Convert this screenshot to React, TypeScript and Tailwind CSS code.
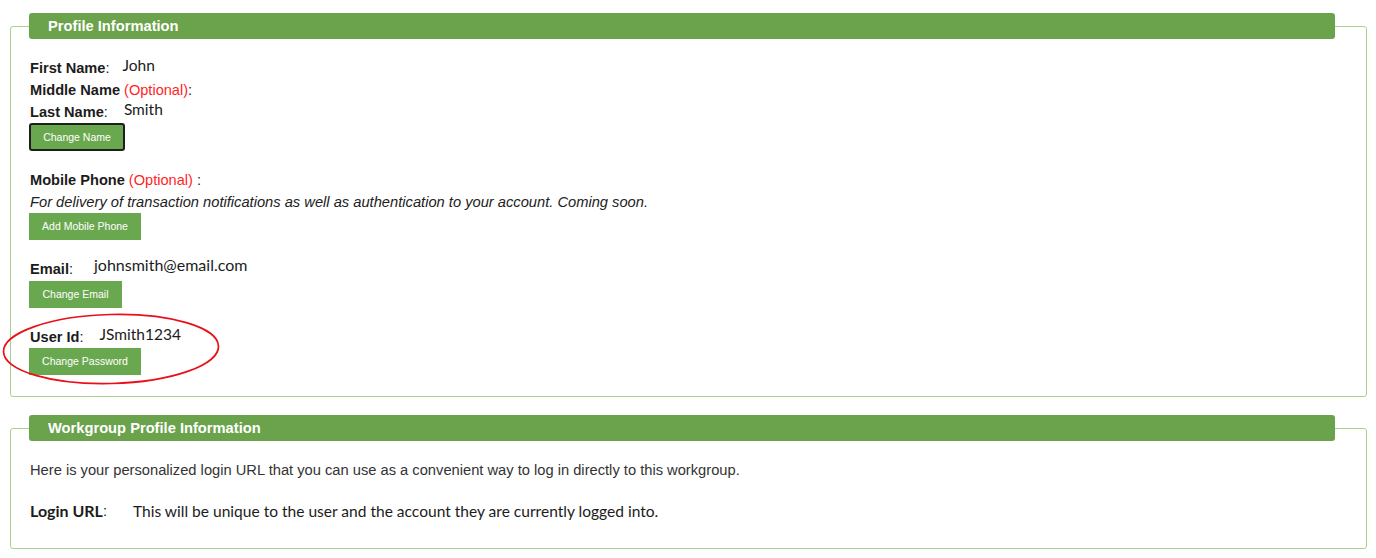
import React from "react";

const Btn = ({ label, w, bordered }: { label: string; w: string; bordered?: boolean }) => (
  <div
    className={
      "flex items-center justify-center bg-[#6aa84f] text-white text-[10.5px] leading-none " +
      w +
      (bordered ? " h-[28px] border-2 border-[#1f1f1f] rounded-[3px]" : " h-[27px]")
    }
  >
    {label}
  </div>
);

const Header = ({ title }: { title: string }) => (
  <div className="-mt-[14px] ml-[18px] mr-[31px] h-[26px] rounded-[3px] bg-[#6aa34b] pl-[19px] text-[14.7px] font-bold leading-[26px] text-white">
    {title}
  </div>
);

export default function App() {
  return (
    <div className="relative h-[558px] w-[1376px] overflow-hidden bg-white font-['Liberation_Sans',Arial,sans-serif] text-[#1c1c1c]">
      {/* Profile Information */}
      <section className="ml-[10px] mr-[9px] mt-[26px] rounded-[3px] border border-[#a9d18e] pb-[21px]">
        <Header title="Profile Information" />
        <div className="pl-[19px]">
          <div className="mt-[18px] flex h-[22px] items-start text-[14.6px] leading-[22px]">
            <span className="font-bold">First Name</span>
            <span>:</span>
            <span className="-mt-[3px] ml-[13px] font-['Lato',sans-serif] text-[15.5px] leading-[22px]">John</span>
          </div>
          <div className="flex h-[22px] items-start text-[14.6px] leading-[22px]">
            <span className="font-bold">Middle Name</span>
            <span className="ml-[4px] text-[#ff1f1f]">(Optional)</span>
            <span>:</span>
          </div>
          <div className="flex h-[22px] items-start text-[14.6px] leading-[22px]">
            <span className="font-bold">Last Name</span>
            <span>:</span>
            <span className="-mt-[3px] ml-[16px] font-['Lato',sans-serif] text-[15.5px] leading-[22px]">Smith</span>
          </div>
        </div>
        <div className="pl-[18px]">
          <Btn label="Change Name" w="w-[96px]" bordered />
        </div>

        <div className="pl-[19px]">
          <div className="mt-[18px] flex h-[22px] items-start text-[14.6px] leading-[22px]">
            <span className="font-bold">Mobile Phone</span>
            <span className="ml-[4px] text-[#ff1f1f]">(Optional)</span>
            <span className="ml-[4px]">:</span>
          </div>
          <div className="h-[22px] text-[14.7px] italic leading-[22px] text-[#222]">
            For delivery of transaction notifications as well as authentication to your account. Coming soon.
          </div>
        </div>
        <div className="pl-[18px]">
          <Btn label="Add Mobile Phone" w="w-[112px]" />
        </div>

        <div className="pl-[19px]">
          <div className="mt-[18px] flex h-[22px] items-start text-[14.6px] leading-[22px]">
            <span className="font-bold">Email</span>
            <span>:</span>
            <span className="-mt-[4px] ml-[21px] font-['Lato',sans-serif] text-[16px] leading-[22px]">
              johnsmith@email.com
            </span>
          </div>
        </div>
        <div className="mt-[1px] pl-[18px]">
          <Btn label="Change Email" w="w-[93px]" />
        </div>

        <div className="pl-[19px]">
          <div className="mt-[18px] flex h-[22px] items-start text-[14.6px] leading-[22px]">
            <span className="font-bold">User Id</span>
            <span>:</span>
            <span className="-mt-[3px] ml-[16px] font-['Lato',sans-serif] text-[15.5px] leading-[22px]">JSmith1234</span>
          </div>
        </div>
        <div className="pl-[18px]">
          <Btn label="Change Password" w="w-[112px]" />
        </div>
      </section>

      {/* Workgroup Profile Information */}
      <section className="ml-[10px] mr-[9px] mt-[31px] rounded-[3px] border border-[#a9d18e] pb-[26px]">
        <Header title="Workgroup Profile Information" />
        <div className="pl-[19px]">
          <div className="mt-[18px] h-[22px] text-[14.7px] leading-[22px] text-[#333]">
            Here is your personalized login URL that you can use as a convenient way to log in directly to this workgroup.
          </div>
          <div className="mt-[19px] flex h-[22px] items-start leading-[22px]">
            <span className="font-['Lato',sans-serif] text-[16px] font-bold">Login URL</span>
            <span className="text-[14.6px]">:</span>
            <span className="ml-[26px] font-['Lato',sans-serif] text-[15.55px]">
              This will be unique to the user and the account they are currently logged into.
            </span>
          </div>
        </div>
      </section>

      {/* red annotation ellipse */}
      <svg className="pointer-events-none absolute left-0 top-[310px]" width="230" height="80" viewBox="0 0 230 80">
        <ellipse
          cx="111"
          cy="39"
          rx="107.5"
          ry="34.5"
          fill="none"
          stroke="#e8101a"
          strokeWidth="1.7"
          transform="rotate(-1.5 111 39)"
        />
      </svg>
    </div>
  );
}
